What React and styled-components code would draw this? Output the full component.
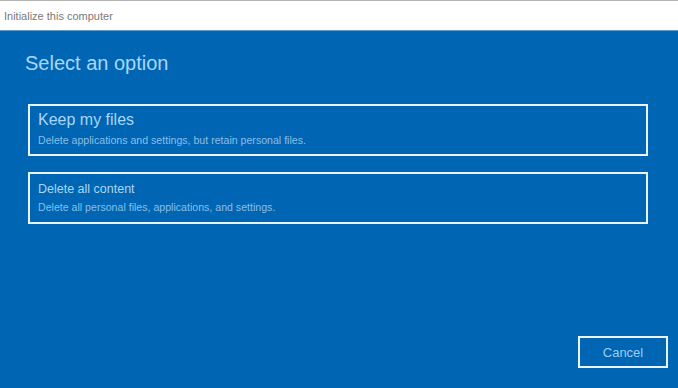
import React from "react";
import styled, { createGlobalStyle } from "styled-components";

const Global = createGlobalStyle`
html, body {
  margin: 0;
  padding: 0;
  height: 100%;
  background: #0066b3;
}
#root {
  height: 100%;
}
`

const Page = styled.div`
display: flex;
flex-direction: column;
height: 388px;
width: 678px;
font-family: "Liberation Sans", Arial, sans-serif;
`
const TitleBar = styled.div`
background: #fff;
border-top: 1px solid #b4b4b4;
display: flex;
align-items: center;
padding-left: 4px;
font-size: 11px;
color: #7a7a7a;
box-sizing: border-box;
height: 31px;
border-bottom: 1px solid #5a9ad0;
`
const Body = styled.div`
flex: 1;
background: #0066b3;
display: flex;
flex-direction: column;
padding: 21px 30px 20px 28px;
`
const Heading = styled.h1`
margin: 0 0 29px -3px;
font-size: 20px;
font-weight: 400;
color: #a9d6f8;
`
const Options = styled.div`
display: flex;
flex-direction: column;
gap: 16px;
`
const Option = styled.div`
height: 52px;
box-sizing: border-box;
border: 2px solid #eaf4fc;
padding: ${({big}) => big ? "5px 8px" : "8px 8px"};
display: flex;
flex-direction: column;
gap: 5px;
`
const OptionTitle = styled.span`
font-size: ${({big}) => big ? "16px" : "12.5px"};
color: #a9d6f8;
`
const OptionText = styled.span`
font-size: 10.6px;
color: #88bfea;
`
const Footer = styled.div`
margin-top: auto;
display: flex;
justify-content: flex-end;
margin-right: -20px;
`
const Button = styled.button`
width: 90px;
height: 32px;
background: transparent;
border: 2px solid #eaf4fc;
color: #9ccdf4;
font-family: inherit;
font-size: 13px;
`

const App = () => {
    return(
        <Page>
          <Global/>
          <TitleBar>Initialize this computer</TitleBar>
          <Body>
            <Heading>Select an option</Heading>
            <Options>
              <Option big>
                <OptionTitle big>Keep my files</OptionTitle>
                <OptionText>Delete applications and settings, but retain personal files.</OptionText>
              </Option>
              <Option>
                <OptionTitle>Delete all content</OptionTitle>
                <OptionText>Delete all personal files, applications, and settings.</OptionText>
              </Option>
            </Options>
            <Footer>
              <Button>Cancel</Button>
            </Footer>
          </Body>
        </Page>
    )
}

export default App
